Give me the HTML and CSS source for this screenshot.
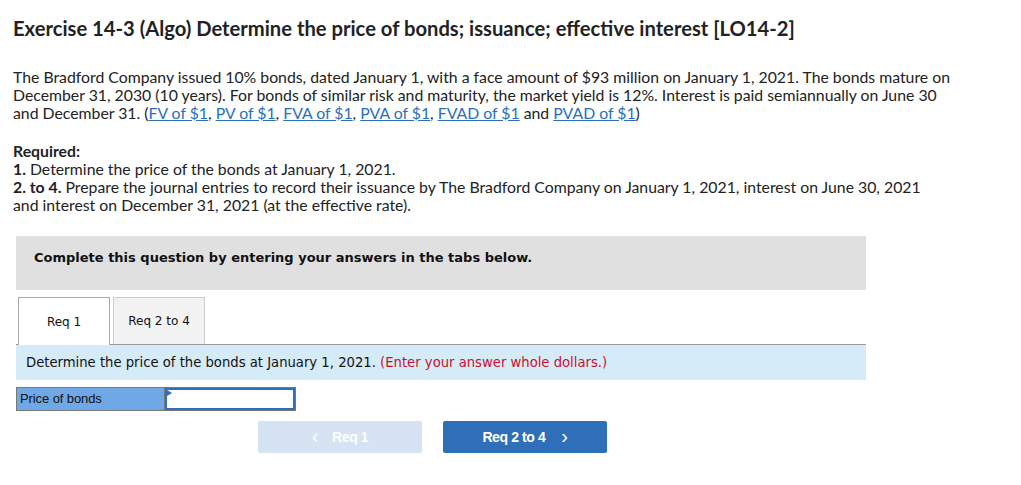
FILE: index.html
```html
<!DOCTYPE html>
<html>
<head>
<meta charset="utf-8">
<link rel="stylesheet" href="styles.css">
</head>
<body>
<div class="page">
  <h1 class="title">Exercise 14-3 (Algo) Determine the price of bonds; issuance; effective interest [LO14-2]</h1>
  <p class="intro">The Bradford Company issued 10% bonds, dated January 1, with a face amount of $93 million on January 1, 2021. The bonds mature on December 31, 2030 (10 years). For bonds of similar risk and maturity, the market yield is 12%. Interest is paid semiannually on June 30 and December 31. (<a href="#">FV of $1</a>, <a href="#">PV of $1</a>, <a href="#">FVA of $1</a>, <a href="#">PVA of $1</a>, <a href="#">FVAD of $1</a> and <a href="#">PVAD of $1</a>)</p>
  <div class="required">
    <div class="req-head">Required:</div>
    <div><b>1.</b> Determine the price of the bonds at January 1, 2021.</div>
    <div><b>2. to 4.</b> Prepare the journal entries to record their issuance by The Bradford Company on January 1, 2021, interest on June 30, 2021 and interest on December 31, 2021 (at the effective rate).</div>
  </div>
  <div class="panel">
    <div class="notice">Complete this question by entering your answers in the tabs below.</div>
    <div class="tabs">
      <div class="tab active">Req 1</div>
      <div class="tab">Req 2 to 4</div>
    </div>
    <div class="prompt">Determine the price of the bonds at January 1, 2021. <span class="hint">(Enter your answer whole dollars.)</span></div>
    <div class="answer">
      <div class="label">Price of bonds</div>
      <div class="input"><span class="flag"></span></div>
    </div>
    <div class="nav">
      <div class="btn prev"><span class="chev">&#8249;</span>Req 1</div>
      <div class="btn next">Req 2 to 4<span class="chev right">&#8250;</span></div>
    </div>
  </div>
</div>
</body>
</html>
```
FILE: styles.css
```css
html, body { margin: 0; padding: 0; background: #fff; }
.page {
  padding: 17px 13px 0 13px;
  font-family: Lato, "Noto Sans", sans-serif;
  color: #222;
}
.title {
  margin: 0;
  font-size: 20.2px;
  font-weight: 700;
  line-height: 22px;
  color: #222;
}
.intro {
  margin: 29px 0 0 0;
  font-size: 15.8px;
  line-height: 18px;
  width: 944px;
}
.intro a { color: #2a6ebb; text-decoration: underline; }
.required {
  margin-top: 20px;
  font-size: 15.8px;
  line-height: 18px;
  width: 925px;
}
.req-head { font-weight: 700; }
.panel {
  margin-left: 3px;
  margin-top: 22px;
  width: 850px;
}
.notice {
  background: #e0e0e0;
  height: 54px;
  box-sizing: border-box;
  padding: 13px 18px;
  font-family: "DejaVu Sans", Verdana, sans-serif;
  font-weight: 700;
  font-size: 13px;
  line-height: 18px;
  color: #111;
}
.tabs {
  display: flex;
  gap: 3px;
  margin-top: 7px;
  padding-left: 2px;
  border-bottom: 1px solid #999;
  height: 47px;
}
.tab {
  width: 92px;
  box-sizing: border-box;
  border: 1px solid #ccc;
  border-bottom: none;
  background: #f2f2f2;
  font-family: "DejaVu Sans", Verdana, sans-serif;
  font-size: 12px;
  color: #111;
  display: flex;
  align-items: center;
  justify-content: center;
  height: 47px;
}
.tab.active {
  background: #fff;
  border-color: #aaa;
  height: 48px;
  margin-bottom: -1px;
  position: relative;
}
.prompt {
  background: #d6ebf8;
  height: 35px;
  box-sizing: border-box;
  padding: 9px 10px;
  font-family: "DejaVu Sans", Verdana, sans-serif;
  font-size: 13.2px;
  line-height: 17px;
  color: #111;
}
.hint { color: #c8102e; }
.answer {
  display: flex;
  margin-top: 7px;
  width: 280px;
  height: 24px;
  border: 1px solid #777;
  box-sizing: border-box;
}
.label {
  width: 148px;
  background: #6fa8e4;
  border-right: 1px solid #777;
  font-family: "Liberation Sans", Arial, sans-serif;
  font-size: 13px;
  letter-spacing: -0.1px;
  color: #111;
  padding: 3px 3px;
  box-sizing: border-box;
  line-height: 16px;
}
.input {
  flex: 1;
  border: 2px solid #2f6fba;
  background: #fff;
  position: relative;
}
.flag {
  position: absolute;
  left: 0;
  top: 0;
  width: 0;
  height: 0;
  border-left: 5px solid #2f6fba;
  border-top: 3px solid transparent;
  border-bottom: 3px solid transparent;
}
.nav {
  display: flex;
  gap: 21px;
  margin-top: 10px;
  padding-left: 242px;
}
.btn {
  width: 164px;
  height: 32px;
  border-radius: 2px;
  display: flex;
  align-items: center;
  justify-content: center;
  font-family: "Liberation Sans", Arial, sans-serif;
  font-weight: 700;
  font-size: 14px;
  letter-spacing: -0.4px;
  color: #fff;
}
.prev { background: #d5e3f2; }
.next { background: #2f6fba; }
.chev { font-size: 20px; font-weight: 400; margin-right: 14px; line-height: 1; position: relative; top: -1px; }
.chev.right { margin-right: 0; margin-left: 16px; }
```
